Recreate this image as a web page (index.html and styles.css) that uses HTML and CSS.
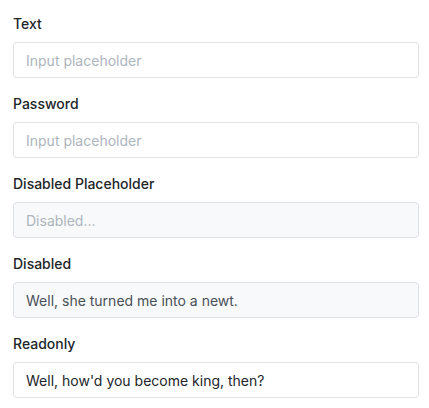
FILE: index.html
```html
<!DOCTYPE html>
<html lang="en">
<head>
<meta charset="utf-8"/>
<meta name="viewport" content="width=device-width,initial-scale=1.0"/>
<title>Inputs</title>
<link rel="stylesheet" href="styles.css">
</head>
<body>
<section id="wrapper">
    <div class="field">
        <label for="f_text">Text</label>
        <input id="f_text" class="inp" type="text" placeholder="Input placeholder">
    </div>
    <div class="field">
        <label for="f_pass">Password</label>
        <input id="f_pass" class="inp" type="password" placeholder="Input placeholder">
    </div>
    <div class="field">
        <label for="f_dis_ph">Disabled Placeholder</label>
        <input id="f_dis_ph" class="inp" type="text" placeholder="Disabled..." disabled>
    </div>
    <div class="field">
        <label for="f_dis">Disabled</label>
        <input id="f_dis" class="inp" type="text" value="Well, she turned me into a newt." disabled>
    </div>
    <div class="field">
        <label for="f_ro">Readonly</label>
        <input id="f_ro" class="inp" type="text" value="Well, how'd you become king, then?" readonly>
    </div>
</section><!-- wrapper -->
</body>
</html>
```
FILE: styles.css
```css
*{margin:0;padding:0;box-sizing:border-box;}
body{
    background:#fff;
    font-family:Inter,"Noto Sans",sans-serif;
    color:#212529;}

#wrapper{
    display:flex;flex-direction:column;
    gap:16px;
    padding:14px 10px 0 13px;}

.field{
    display:flex;flex-direction:column;
    gap:8px;}

.field label{
    font-size:14px;line-height:20px;
    font-weight:500;
    color:#212529;}

.inp{
    width:100%;height:36px;
    padding:0 12px;
    font-family:inherit;font-size:14px;
    color:#212529;
    background:#fff;
    border:1px solid #dee2e6;
    border-radius:4px;
    outline:none;}

.inp::placeholder{color:#adb5bd;opacity:1;}

.inp:disabled{
    background:#f8f9fa;
    color:#495057;
    -webkit-text-fill-color:#495057;}
.inp:disabled::placeholder{color:#adb5bd;-webkit-text-fill-color:#adb5bd;}
```
